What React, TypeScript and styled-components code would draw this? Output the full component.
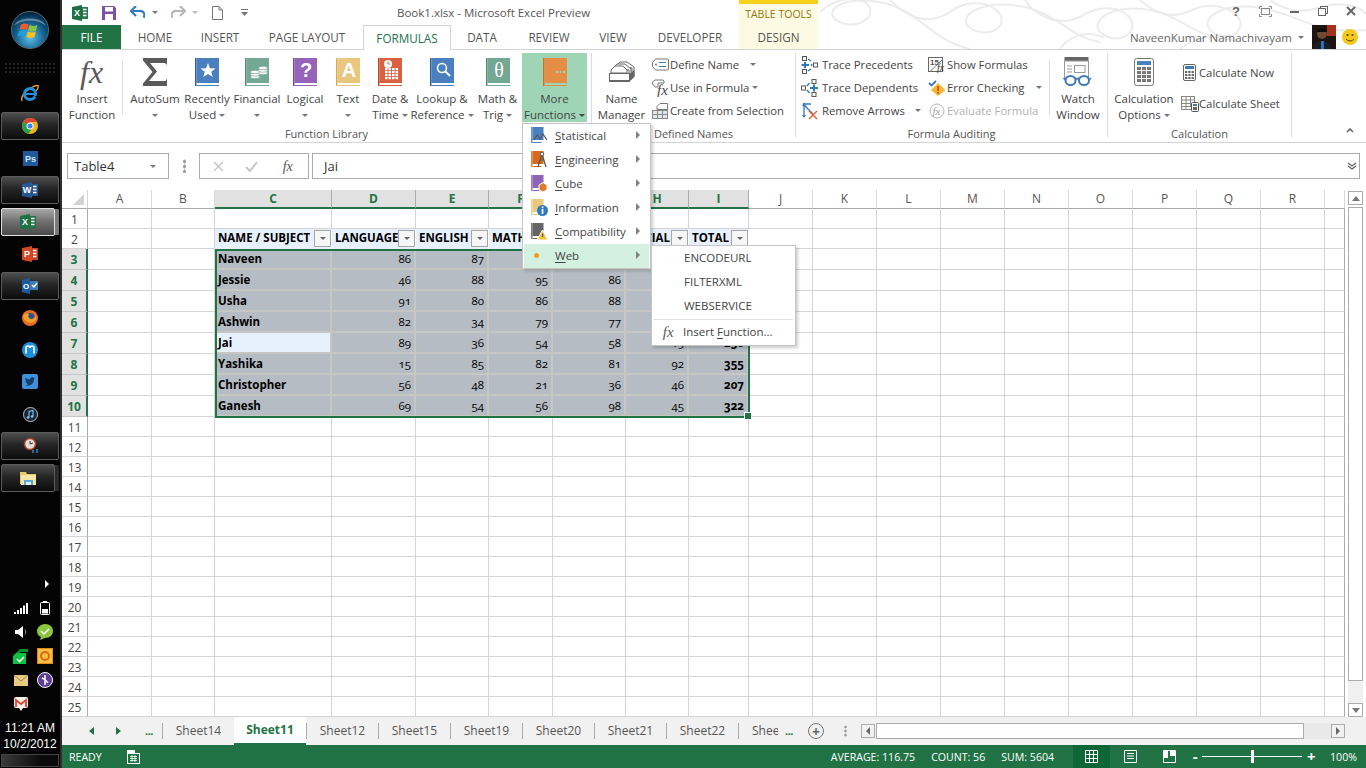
import styled, { createGlobalStyle } from "styled-components";
import type { ReactNode } from "react";

const GlobalStyle = createGlobalStyle`
	html, body {
		margin: 0;
		padding: 0;
		overflow: hidden;
		background: #fff;
		font-family: "Open Sans", "Liberation Sans", sans-serif;
	}
	* { box-sizing: border-box; }
`;

const GREEN = "#217346";
const TEXT = "#444444";
const UI_FONT = `"Open Sans", "Liberation Sans", sans-serif`;

const Page = styled.div`
	position: relative;
	display: flex;
	width: 1366px;
	height: 768px;
	overflow: hidden;
	background: #fff;
	color: ${TEXT};
	font-size: 11.3px;
`;

const Gap = styled.span<{ $w: number }>`
	width: ${(p) => p.$w}px;
	flex-shrink: 0;
`;

/* ---------- windows taskbar ---------- */

const Sidebar = styled.aside`
	display: flex;
	flex-direction: column;
	width: 62px;
	height: 768px;
	background: #030303;
	border-right: 2px solid #2d2d2d;
	flex-shrink: 0;
`;

const Orb = styled.div`
	display: flex;
	justify-content: center;
	align-items: center;
	height: 60px;
	padding-right: 1px;
`;

const Gripper = styled.div`
	height: 18px;
	margin: 0 4px;
	background-image: radial-gradient(#4a4a4a 0.6px, transparent 0.8px);
	background-size: 4px 4px;
	background-position: 0 2px;
	background-repeat: repeat;
	clip-path: inset(1px 0 5px 0);
`;

const TaskList = styled.div`
	display: flex;
	flex-direction: column;
`;

const TaskSlot = styled.div<{ $state?: "open" | "active" | "group" }>`
	display: flex;
	justify-content: center;
	align-items: center;
	height: 28px;
	margin: 2px ${(p) => (p.$state === "active" || p.$state === "group" ? "5px" : "1px")} 2px 1px;
	border-radius: 2px;
	border: 1px solid
		${(p) => (p.$state === "active" ? "#e0e0e0" : p.$state ? "#5c5c5c" : "transparent")};
	background: ${(p) =>
		p.$state === "active"
			? "linear-gradient(180deg, #a8a8a8 0%, #6e6e6e 50%, #4a4a4a 100%)"
			: p.$state
				? "linear-gradient(180deg, #4e4e4e 0%, #262626 45%, #0c0c0c 100%)"
				: "transparent"};
	box-shadow: ${(p) =>
		p.$state === "active" ? "5px 0 0 -1px #7a7a7a" : p.$state === "group" ? "5px 0 0 -1px #2a2a2a" : "none"};
`;

const Spring = styled.div`
	flex: 1;
`;

const TrayArrow = styled.div`
	width: 0;
	height: 0;
	margin: 0 0 8px 45px;
	border-left: 4px solid #fff;
	border-top: 4px solid transparent;
	border-bottom: 4px solid transparent;
`;

const Tray = styled.div`
	display: grid;
	grid-template-columns: 24px 24px;
	grid-auto-rows: 24px;
	margin-left: 9px;
	place-items: center;
`;

const Clock = styled.div`
	margin-top: 4px;
	color: #fff;
	font-size: 12px;
	line-height: 16px;
	text-align: center;
	white-space: nowrap;
	font-family: "Liberation Sans", sans-serif;
`;

const ShowDesktop = styled.div`
	height: 13px;
	margin: 2px 1px 1px 1px;
	border: 1px solid #444;
	background: linear-gradient(90deg, #3a3a3a, #0b0b0b 70%);
`;

/* ---------- main column ---------- */

const Main = styled.main`
	display: flex;
	flex-direction: column;
	flex: 1;
	min-width: 0;
`;

const Header = styled.header`
	position: relative;
	height: 50px;
	border-bottom: 1px solid #d4d4d4;
`;

const Swirl = styled.svg`
	position: absolute;
	left: 758px;
	top: 0;
`;

const TitleBar = styled.div`
	position: relative;
	display: flex;
	height: 25px;
`;

const QuickAccess = styled.div`
	display: flex;
	align-items: center;
	width: 335px;
	height: 25px;
	padding-left: 10px;
`;

const QatSlot = styled.span<{ $w: number }>`
	display: flex;
	align-items: center;
	width: ${(p) => p.$w}px;
`;

const Title = styled.div`
	width: 342px;
	color: #555;
	font-size: 11.5px;
	line-height: 26px;
`;

const ContextLabel = styled.div`
	width: 79px;
	height: 25px;
	background: #fdfae4;
	border-top: 4px solid #f6d21c;
	color: #9a7608;
	font-size: 10.5px;
	line-height: 21px;
	text-align: center;
	white-space: nowrap;
`;

const WindowControls = styled.div`
	display: flex;
	align-items: center;
	margin-left: auto;
	height: 22px;
	padding-right: 10px;
	gap: 18px;
`;

const TabRow = styled.nav`
	position: relative;
	display: flex;
	height: 24px;
`;

const Tab = styled.div<{ $w: number; $kind?: "file" | "active" | "context" }>`
	width: ${(p) => p.$w}px;
	height: ${(p) => (p.$kind === "active" ? "25px" : "24px")};
	line-height: 24px;
	text-align: center;
	font-size: 11.7px;
	white-space: nowrap;
	color: ${(p) => (p.$kind === "file" ? "#fff" : p.$kind === "active" ? GREEN : "#555")};
	background: ${(p) =>
		p.$kind === "file" ? GREEN : p.$kind === "context" ? "#fdfae4" : p.$kind === "active" ? "#fff" : "transparent"};
	border: ${(p) => (p.$kind === "active" ? "1px solid #d4d4d4" : "none")};
	border-bottom: none;
	z-index: 1;
`;

const UserArea = styled.div`
	display: flex;
	align-items: center;
	margin-left: auto;
	height: 24px;
	padding-right: 8px;
`;

const UserName = styled.span`
	margin-right: 6px;
	color: #666;
	font-size: 11.5px;
	white-space: nowrap;
`;

const SmallCaret = styled.span<{ $gap?: number; $color?: string }>`
	display: inline-block;
	width: 0;
	height: 0;
	margin-left: ${(p) => p.$gap ?? 3}px;
	border-top: 3px solid ${(p) => p.$color ?? "#777"};
	border-left: 3px solid transparent;
	border-right: 3px solid transparent;
	vertical-align: middle;
`;

/* ---------- ribbon ---------- */

const Ribbon = styled.section`
	display: flex;
	height: 93px;
	padding-top: 3px;
	border-bottom: 1px solid #d4d4d4;
`;

const RibbonGroup = styled.div<{ $w: number }>`
	display: flex;
	flex-direction: column;
	width: ${(p) => p.$w}px;
	height: 84px;
	border-right: 1px solid #dcdcdc;
	flex-shrink: 0;
`;

const GroupBody = styled.div`
	display: flex;
	height: 69px;
	flex-shrink: 0;
`;

const GroupLabel = styled.div`
	height: 10px;
	margin-top: 5px;
	text-align: center;
	color: #555;
	font-size: 11px;
	line-height: 14px;
`;

const LargeButton = styled.div<{ $w: number; $on?: boolean }>`
	display: flex;
	flex-direction: column;
	align-items: center;
	width: ${(p) => p.$w}px;
	height: 69px;
	padding-top: 4px;
	background: ${(p) => (p.$on ? "#9fd5b7" : "transparent")};
	flex-shrink: 0;
`;

const LargeIcon = styled.div`
	display: flex;
	align-items: center;
	justify-content: center;
	height: 30px;
	margin-bottom: 4px;
	flex-shrink: 0;
`;

const LargeLabel = styled.div`
	font-size: 11.5px;
	line-height: 16px;
	text-align: center;
	white-space: nowrap;
	flex-shrink: 0;
`;

const InnerDivider = styled.div`
	width: 1px;
	height: 55px;
	margin: 7px 4px 0 0;
	background: #dcdcdc;
	flex-shrink: 0;
`;

const SmallColumn = styled.div<{ $w: number; $top?: number; $gap?: number }>`
	display: flex;
	flex-direction: column;
	width: ${(p) => p.$w}px;
	padding-top: ${(p) => p.$top ?? 0}px;
	gap: ${(p) => p.$gap ?? 0}px;
	flex-shrink: 0;
`;

const SmallButton = styled.div<{ $muted?: boolean }>`
	display: flex;
	align-items: center;
	height: 23px;
	font-size: 11.3px;
	white-space: nowrap;
	color: ${(p) => (p.$muted ? "#b1b1b1" : TEXT)};
`;

const SmallIcon = styled.span<{ $w?: number }>`
	display: flex;
	align-items: center;
	justify-content: center;
	width: ${(p) => p.$w ?? 19}px;
	height: 18px;
	flex-shrink: 0;
`;

const CollapseArrow = styled.svg`
	align-self: flex-start;
	margin: 75px 0 0 54px;
`;

/* ---------- formula bar ---------- */

const FormulaBar = styled.div`
	display: flex;
	align-items: center;
	height: 47px;
	padding: 0 6px 1px 5px;
	flex-shrink: 0;
`;

const NameBox = styled.div`
	display: flex;
	align-items: center;
	justify-content: space-between;
	width: 102px;
	height: 26px;
	padding: 0 12px 0 6px;
	border: 1px solid #ababab;
	font-size: 13px;
	color: #333;
`;

const BarGrip = styled.div`
	width: 3px;
	height: 14px;
	margin: 0 13px 0 14px;
	background-image: radial-gradient(#9a9a9a 1.1px, transparent 1.3px);
	background-size: 3px 5px;
`;

const FxBox = styled.div`
	display: flex;
	align-items: center;
	width: 110px;
	height: 26px;
	padding: 0 13px;
	justify-content: space-between;
	border: 1px solid #ababab;
`;

const FormulaInput = styled.div`
	display: flex;
	align-items: center;
	justify-content: space-between;
	flex: 1;
	height: 26px;
	margin-left: 3px;
	padding: 0 2px 0 11px;
	border: 1px solid #ababab;
	font-size: 13px;
	color: #333;
`;

/* ---------- sheet ---------- */

const SheetArea = styled.div`
	display: flex;
	height: 527px;
	flex-shrink: 0;
`;

const COLUMN_SIZES = [26, 64, 63, 117, 84, 73, 64, 73, 63, 60, 64, 64, 64, 64, 64, 64, 64, 64, 64, 20];
const ROW_SIZES = [19, 20, 20, 21, 21, 21, 21, 21, 21, 21, 21, ...Array(15).fill(20)];

const SheetGrid = styled.div`
	position: relative;
	display: grid;
	grid-template-columns: ${COLUMN_SIZES.map((c) => `${c}px`).join(" ")};
	grid-template-rows: ${ROW_SIZES.map((r) => `${r}px`).join(" ")};
	width: 1283px;
	height: 527px;
	border-bottom: 1px solid #ababab;
`;

const Corner = styled.div`
	position: relative;
	border-bottom: 1px solid #ababab;
	border-right: 1px solid #d4d4d4;
	&::after {
		content: "";
		position: absolute;
		right: 3px;
		bottom: 3px;
		width: 0;
		height: 0;
		border-left: 11px solid transparent;
		border-bottom: 11px solid #d2d2d2;
	}
`;

const ColHead = styled.div<{ $on?: boolean }>`
	text-align: center;
	font-size: 12px;
	line-height: 18px;
	color: ${(p) => (p.$on ? GREEN : "#555")};
	font-weight: ${(p) => (p.$on ? 700 : 400)};
	background: ${(p) => (p.$on ? "#e1e1e1" : "#fff")};
	border-right: 1px solid ${(p) => (p.$on ? "#ababab" : "#d9d9d9")};
	border-bottom: ${(p) => (p.$on ? `2px solid ${GREEN}` : "1px solid #ababab")};
`;

const RowHead = styled.div<{ $on?: boolean }>`
	text-align: center;
	font-size: 12px;
	line-height: 21px;
	color: ${(p) => (p.$on ? GREEN : "#444")};
	font-weight: ${(p) => (p.$on ? 700 : 400)};
	background: ${(p) => (p.$on ? "#e1e1e1" : "#fff")};
	border-right: ${(p) => (p.$on ? `2px solid ${GREEN}` : "1px solid #ababab")};
	border-bottom: 1px solid ${(p) => (p.$on ? "#c6c6c6" : "#d4d4d4")};
`;

const Cell = styled.div<{ $kind?: "head" | "band" | "active"; $right?: boolean; $bold?: boolean; $edge?: boolean }>`
	display: flex;
	align-items: center;
	justify-content: ${(p) => (p.$right ? "flex-end" : p.$kind === "head" ? "space-between" : "flex-start")};
	padding: 0 ${(p) => (p.$right ? "3px" : "0")} ${(p) => (p.$kind === "head" ? "1px" : "0")} 3px;
	overflow: hidden;
	white-space: nowrap;
	color: #000;
	font-family: "Open Sans", sans-serif;
	font-size: 11.5px;
	font-weight: ${(p) => (p.$bold ? 700 : 400)};
	font-variant-numeric: oldstyle-nums;
	background: ${(p) =>
		p.$kind === "band" ? "#b5bcc4" : p.$kind === "active" ? "#e7f1fd" : p.$kind === "head" ? "#e7f1fd" : "#fff"};
	border-right: ${(p) =>
		p.$kind === "band" || p.$kind === "active"
			? "2px solid #c6c6c2"
			: p.$kind === "head"
				? "1px solid #fff"
				: `1px solid ${p.$edge ? "#ababab" : "#d4d4d4"}`};
	border-bottom: ${(p) =>
		p.$kind === "band" || p.$kind === "active"
			? "2px solid #c6c6c2"
			: p.$kind === "head"
				? "none"
				: "1px solid #d4d4d4"};
`;

const HeadText = styled.span`
	padding-bottom: 2px;
	flex-shrink: 1;
	overflow: hidden;
`;

const FilterButton = styled.span`
	display: flex;
	align-items: center;
	justify-content: center;
	width: 17px;
	height: 17px;
	background: #f6f6f6;
	border: 1px solid #a6a6a6;
	flex-shrink: 0;
`;

const Selection = styled.div`
	position: absolute;
	left: 153px;
	top: 59px;
	width: 535px;
	height: 169px;
	border: 2px solid ${GREEN};
	pointer-events: none;
	&::after {
		content: "";
		position: absolute;
		right: -4px;
		bottom: -4px;
		width: 6px;
		height: 6px;
		background: ${GREEN};
		border: 1px solid #fff;
	}
`;

const VScroll = styled.div`
	display: flex;
	flex-direction: column;
	width: 21px;
	padding: 1px 3px 0 3px;
`;

const ScrollButton = styled.div<{ $w?: number }>`
	display: flex;
	align-items: center;
	justify-content: center;
	width: ${(p) => (p.$w ? `${p.$w}px` : "auto")};
	height: 14px;
	border: 1px solid #ababab;
	flex-shrink: 0;
`;

const VThumb = styled.div`
	height: 475px;
	margin-top: 2px;
	border: 1px solid #ababab;
`;

const VTrack = styled.div`
	height: 22px;
	background: #f0f0f0;
`;

/* ---------- sheet tabs ---------- */

const SheetTabs = styled.div`
	display: flex;
	align-items: center;
	height: 28px;
	background: #f1f1f1;
	flex-shrink: 0;
`;

const TabNav = styled.div`
	display: flex;
	align-items: center;
	justify-content: space-between;
	width: 100px;
	height: 28px;
	padding: 0 7px 0 27px;
`;

const SheetTab = styled.div<{ $active?: boolean; $w?: number }>`
	width: ${(p) => p.$w ?? 72}px;
	height: ${(p) => (p.$active ? "28px" : "16px")};
	margin-top: ${(p) => (p.$active ? "-1px" : "0")};
	overflow: hidden;
	white-space: nowrap;
	text-align: ${(p) => (p.$w ? "left" : "center")};
	padding-left: ${(p) => (p.$w ? "13px" : "0")};
	font-size: 12px;
	line-height: ${(p) => (p.$active ? "26px" : "16px")};
	color: ${(p) => (p.$active ? GREEN : "#555")};
	font-weight: ${(p) => (p.$active ? 700 : 400)};
	background: ${(p) => (p.$active ? "#fff" : "transparent")};
	border-bottom: ${(p) => (p.$active ? `2px solid ${GREEN}` : "none")};
	border-left: ${(p) => (p.$active ? "none" : "1px solid #ababab")};
`;

const GreenDots = styled.span<{ $w: number }>`
	width: ${(p) => p.$w}px;
	text-align: center;
	color: ${GREEN};
	font-weight: 700;
	font-size: 11px;
	line-height: 10px;
	letter-spacing: -0.5px;
`;

const AddSheet = styled.span`
	display: flex;
	align-items: center;
	justify-content: center;
	width: 16px;
	height: 16px;
	margin: 0 7px 0 8px;
	border: 1px solid #777;
	border-radius: 50%;
	color: #666;
	font-size: 14px;
	font-weight: 700;
	line-height: 13px;
`;

const SplitGrip = styled.span`
	width: 3px;
	height: 12px;
	margin: 0 14px 0 13px;
	background-image: radial-gradient(#9a9a9a 1px, transparent 1.2px);
	background-size: 3px 4px;
`;

const HScroll = styled.div`
	display: flex;
	align-items: center;
	width: 484px;
	height: 16px;
	flex-shrink: 0;
`;

const HThumb = styled.div`
	width: 428px;
	height: 16px;
	margin-left: 1px;
	background: #fff;
	border: 1px solid #ababab;
`;

const HTrack = styled.div`
	width: 27px;
	height: 16px;
	background: #e9e9e9;
`;

/* ---------- status bar ---------- */

const StatusBar = styled.footer`
	display: flex;
	align-items: center;
	height: 23px;
	background: ${GREEN};
	color: #fff;
	font-size: 10.6px;
	flex-shrink: 0;
`;

const StatusLeft = styled.div`
	display: flex;
	align-items: center;
	gap: 25px;
	padding-left: 7px;
`;

const StatusStats = styled.div`
	display: flex;
	margin-left: auto;
	gap: 16px;
`;

const ViewButton = styled.div<{ $on?: boolean; $w: number }>`
	display: flex;
	align-items: center;
	justify-content: center;
	width: ${(p) => p.$w}px;
	height: 23px;
	background: ${(p) => (p.$on ? "#0f6636" : "transparent")};
`;

const ZoomBar = styled.div`
	position: relative;
	width: 100px;
	height: 1px;
	margin: 0 5px 0 3px;
	background: #fff;
	flex-shrink: 0;
	&::after {
		content: "";
		position: absolute;
		left: 49px;
		top: -6px;
		width: 3px;
		height: 13px;
		background: #fff;
	}
`;

const ZoomSign = styled.span`
	width: 8px;
	text-align: center;
	font-size: 15px;
	font-weight: 700;
	line-height: 15px;
`;

const ZoomPercent = styled.span`
	margin: 0 9px 0 15px;
`;

/* ---------- flyout menus ---------- */

const Menu = styled.div<{ $left: number; $top: number; $w: number; $h: number }>`
	position: absolute;
	left: ${(p) => p.$left}px;
	top: ${(p) => p.$top}px;
	width: ${(p) => p.$w}px;
	height: ${(p) => p.$h}px;
	padding: 0 1px;
	background: #fff;
	border: 1px solid #c6c6c6;
	box-shadow: 2px 2px 3px rgba(0, 0, 0, 0.2);
	font-family: ${UI_FONT};
	z-index: 5;
`;

const MenuItem = styled.div<{ $on?: boolean }>`
	display: flex;
	align-items: center;
	height: 24px;
	padding: 0 9px 2px 0;
	font-size: 11.5px;
	color: ${TEXT};
	white-space: nowrap;
	background: ${(p) => (p.$on ? "#d3f0e0" : "transparent")};
	u {
		text-underline-offset: 2px;
	}
`;

const MenuGlyph = styled.span<{ $w: number }>`
	display: flex;
	align-items: center;
	justify-content: center;
	width: ${(p) => p.$w}px;
	flex-shrink: 0;
`;

const MenuArrow = styled.span`
	margin-left: auto;
	width: 0;
	height: 0;
	border-left: 4px solid #808080;
	border-top: 4px solid transparent;
	border-bottom: 4px solid transparent;
`;

const MenuDot = styled.span`
	width: 5px;
	height: 5px;
	border-radius: 50%;
	background: #f0a020;
`;

const MenuRule = styled.div`
	height: 1px;
	margin: 1px 1px 0 1px;
	background: #e1e1e1;
`;

/* ---------- icons ---------- */

const IconSvg = styled.svg`
	display: block;
	flex-shrink: 0;
`;

function Svg({ w, h, vb, children }: { w: number; h: number; vb?: string; children: ReactNode }) {
	return (
		<IconSvg width={w} height={h} viewBox={vb ?? `0 0 ${w} ${h}`}>
			{children}
		</IconSvg>
	);
}

function FxGlyph({ size, color = "#5a5a5a" }: { size: number; color?: string }) {
	return (
		<IconSvg width={size * 1.1} height={(size * 34) / 30} viewBox="0 0 33 34">
			<text x="16.5" y="27" textAnchor="middle" fontFamily="Liberation Serif, serif" fontStyle="italic" fontSize="30" fill={color}>
				fx
			</text>
		</IconSvg>
	);
}

function Book({ color, dark, children }: { color: string; dark: string; children?: ReactNode }) {
	return (
		<Svg w={24} h={28}>
			<rect x="0" y="0" width="1.5" height="28" fill={dark} />
			<rect x="1.5" y="0" width="22.5" height="25" fill={color} />
			<rect x="1.5" y="27" width="22.5" height="1" fill={color} />
			{children}
		</Svg>
	);
}

const Label = ({ x, y, size, children, fill = "#fff" }: { x: number; y: number; size: number; children: ReactNode; fill?: string }) => (
	<text x={x} y={y} fontFamily="Liberation Sans, sans-serif" fontWeight="700" fontSize={size} fill={fill} textAnchor="middle">
		{children}
	</text>
);

const StarBook = () => (
	<Book color="#4a80bd" dark="#2e5f99">
		<path d="M13 5l2 5.2 5.5.2-4.3 3.4 1.5 5.3-4.7-3-4.7 3 1.5-5.3-4.3-3.4 5.5-.2z" fill="#fff" />
	</Book>
);

const CoinBook = () => (
	<Book color="#74a893" dark="#4f8a72">
		<g fill="#fff" stroke="#74a893" strokeWidth="0.7">
			<ellipse cx="18" cy="15" rx="4.5" ry="1.7" />
			<ellipse cx="18" cy="12.5" rx="4.5" ry="1.7" />
			<ellipse cx="18" cy="10" rx="4.5" ry="1.7" />
			<ellipse cx="10" cy="19" rx="4.5" ry="1.7" />
			<ellipse cx="10" cy="16.5" rx="4.5" ry="1.7" />
			<ellipse cx="10" cy="14" rx="4.5" ry="1.7" />
		</g>
	</Book>
);

const LogicBook = () => (
	<Book color="#9563b9" dark="#7a459f">
		<Label x={13} y={19} size={20}>?</Label>
	</Book>
);

const TextBook = () => (
	<Book color="#eac77f" dark="#d7ab54">
		<Label x={13} y={19} size={20}>A</Label>
	</Book>
);

const DateBook = () => (
	<Book color="#d8623f" dark="#b9482a">
		<circle cx="10" cy="6" r="4" fill="#fff" />
		<path d="M10 3.5V6h2" stroke="#d8623f" fill="none" />
		<g fill="#fff">
			{[0, 1, 2, 3].flatMap((r) =>
				[0, 1, 2, 3].map((c) => <rect key={`${r}-${c}`} x={7 + c * 3.5} y={10 + r * 3} width="2.6" height="2.2" />),
			)}
		</g>
	</Book>
);

const LookupBook = () => (
	<Book color="#4a80bd" dark="#2e5f99">
		<circle cx="12" cy="10" r="4.5" fill="none" stroke="#fff" strokeWidth="1.6" />
		<path d="M15.5 13.5l4.5 4.5" stroke="#fff" strokeWidth="2" />
	</Book>
);

const MathBook = () => (
	<Book color="#74a893" dark="#4f8a72">
		<text x="13" y="19" fontFamily="Liberation Serif, serif" fontSize="20" fill="#fff" textAnchor="middle">
			θ
		</text>
	</Book>
);

const MoreBook = () => (
	<Book color="#e58d45" dark="#cf7127">
		<g fill="#9fd5b7">
			<rect x="13" y="13" width="2" height="2" />
			<rect x="16.5" y="13" width="2" height="2" />
			<rect x="20" y="13" width="2" height="2" />
		</g>
	</Book>
);

const Sigma = () => (
	<Svg w={24} h={28}>
		<path d="M0 0H24V7L22 5H7L14 13.5 6 23H22.5L24 20.5V28H0V25.5L9.5 14 0 2.5Z" fill="#595959" />
	</Svg>
);

const TagStack = () => (
	<Svg w={28} h={28}>
		<g fill="#fff" stroke="#666" strokeWidth="1">
			<path d="M9 7l3-3h7l7 5v9l-2 2V10z" />
			<path d="M6 9l3-3h8l6 5v9l-2 2V12z" />
			<path d="M3 12l4-4h8l4 4v3H3z" />
			<rect x="1.5" y="15.5" width="20" height="8" />
		</g>
		<path d="M21.5 16l5-4v7l-5 4.5z" fill="#666" />
		<rect x="2" y="22" width="19" height="1.5" fill="#666" />
	</Svg>
);

const WatchIcon = () => (
	<Svg w={30} h={32}>
		<rect x="1.5" y="1" width="24" height="4" fill="#666" />
		<g fill="none" stroke="#9a9a9a">
			<rect x="1.5" y="5" width="24" height="17" />
			<rect x="11.5" y="9.5" width="10.5" height="7" />
			<path d="M4 10h5M4 13h5M4 16h5" />
		</g>
		<g fill="#fff" stroke="#3f7ab8" strokeWidth="2">
			<ellipse cx="7.5" cy="24.5" rx="5" ry="4.5" />
			<ellipse cx="21" cy="24.5" rx="5" ry="4.5" />
		</g>
		<path d="M12.5 23h4M2.5 24L0.5 22M26 24l2-2" stroke="#3f7ab8" strokeWidth="1.6" />
	</Svg>
);

const CalcLarge = () => (
	<Svg w={20} h={28}>
		<rect x="0.5" y="0.5" width="19" height="27" rx="2" fill="#fff" stroke="#777" />
		<rect x="3" y="3" width="14" height="4" fill="#4a80bd" />
		<g fill="#777">
			{[0, 1, 2, 3].flatMap((r) =>
				[0, 1, 2].map((c) => <rect key={`${r}-${c}`} x={3 + c * 5} y={9 + r * 4} width="4" height="3" />),
			)}
		</g>
	</Svg>
);

const CalcNow = () => (
	<Svg w={13} h={17}>
		<rect x="0.5" y="0.5" width="12" height="16" rx="1.5" fill="#fff" stroke="#666" />
		<rect x="2" y="2" width="9" height="3" fill="#3f7ab8" />
		<g fill="#666">
			{[0, 1, 2].flatMap((r) => [0, 1, 2].map((c) => <rect key={`${r}-${c}`} x={2 + c * 3.3} y={7 + r * 3} width="2.3" height="2" />))}
		</g>
	</Svg>
);

const CalcSheet = () => (
	<Svg w={18} h={16}>
		<g fill="none" stroke="#888">
			<rect x="0.5" y="0.5" width="13" height="13" />
			<path d="M0.5 4h13M0.5 7.5h13M0.5 10.5h10M5 0.5v13M9.5 0.5v10" />
		</g>
		<rect x="10.5" y="6.5" width="7" height="9" rx="1" fill="#fff" stroke="#555" />
		<rect x="12" y="8" width="4" height="2" fill="#3f7ab8" />
		<rect x="12" y="11" width="4" height="3" fill="#666" />
	</Svg>
);

const DefineNameIcon = () => (
	<Svg w={17} h={13}>
		<path d="M3.5 1H15.5a1 1 0 0 1 1 1v9a1 1 0 0 1-1 1H3.5L.5 8.5v-4z" fill="#fff" stroke="#777" />
		<circle cx="4" cy="6.5" r="1" fill="#777" />
		<path d="M7 4.5h7M7 8.5h7" stroke="#3f7ab8" strokeWidth="1.2" />
	</Svg>
);

const UseFormulaIcon = () => (
	<Svg w={18} h={18}>
		<path d="M3 1h8l1 1v2H6v4H3L.5 5V3z" fill="#fff" stroke="#777" />
		<text x="5" y="16" fontFamily="Liberation Serif, serif" fontStyle="italic" fontSize="15" fill="#444">
			fx
		</text>
	</Svg>
);

const CreateSelIcon = () => (
	<Svg w={17} h={16}>
		<rect x="0.5" y="7.5" width="15" height="8" fill="#dfe7ee" stroke="#888" />
		<path d="M5.5 7.5v8M10.5 7.5v8M.5 11.5h15" stroke="#888" />
		<path d="M5 3.5L8 .5h7.5v6H5z" fill="#fff" stroke="#777" />
	</Svg>
);

const TracePrecIcon = () => (
	<Svg w={17} h={18}>
		<g fill="#fff" stroke="#555">
			<rect x="1.5" y="0.5" width="4" height="4" />
			<rect x="1.5" y="13.5" width="4" height="4" />
			<rect x="12.5" y="7" width="4" height="4" />
		</g>
		<path d="M0.5 9h7.5M4 6v6" stroke="#2f79c2" strokeWidth="2" />
		<path d="M7 3l3 2M7 15l3-2" stroke="#2f79c2" strokeWidth="1.4" />
		<path d="M10 7.5L12 9 10 10.5z" fill="#2f79c2" />
	</Svg>
);

const TraceDepIcon = () => (
	<Svg w={17} h={18}>
		<g fill="#fff" stroke="#555">
			<rect x="0.5" y="7" width="4" height="4" />
			<rect x="11" y="0.5" width="4" height="4" />
			<rect x="11" y="13.5" width="4" height="4" />
		</g>
		<path d="M9 9h8M13 5.5v7" stroke="#2f79c2" strokeWidth="2" />
		<path d="M6 7l2.5-3M6 11l2.5 3" stroke="#2f79c2" strokeWidth="1.4" />
	</Svg>
);

const RemoveArrowsIcon = () => (
	<Svg w={17} h={18}>
		<path d="M3 1v13M3 3l9 9M2 2h8" stroke="#2f79c2" strokeWidth="1.3" fill="none" />
		<path d="M3 1L1 4h4zM3 16l-2-3h4z" fill="#2f79c2" />
		<path d="M8 9l8 8M16 9l-8 8" stroke="#e0663a" strokeWidth="1.5" />
	</Svg>
);

const ShowFormulasIcon = () => (
	<Svg w={18} h={16}>
		<rect x="0.5" y="0.5" width="14" height="14" fill="#fff" stroke="#666" />
		<text x="2" y="8" fontFamily="Liberation Sans, sans-serif" fontWeight="700" fontSize="8" fill="#555">
			15
		</text>
		<path d="M2 14.5L15 2" stroke="#777" />
		<text x="9" y="14" fontFamily="Liberation Serif, serif" fontStyle="italic" fontSize="10" fill="#333">
			fx
		</text>
	</Svg>
);

const ErrorIcon = () => (
	<Svg w={18} h={16}>
		<path d="M1 3l2.5 2.5L8 1" stroke="#3f7ab8" strokeWidth="1.8" fill="none" />
		<path d="M10 3L17.5 10 10 16 3 10z" fill="#f7b733" />
		<rect x="9.2" y="6" width="1.8" height="5" fill="#d8512a" />
		<rect x="9.2" y="12" width="1.8" height="1.8" fill="#d8512a" />
	</Svg>
);

const EvalIcon = () => (
	<Svg w={16} h={16}>
		<circle cx="8" cy="8" r="7" fill="#fff" stroke="#b5b5b5" />
		<text x="3.5" y="12" fontFamily="Liberation Serif, serif" fontStyle="italic" fontSize="11" fill="#a0a0a0">
			fx
		</text>
	</Svg>
);

function MiniBook({ color, children }: { color: string; children?: ReactNode }) {
	return (
		<Svg w={17} h={17}>
			<rect x="0" y="0" width="1.5" height="16" fill={color} opacity="0.85" />
			<rect x="1.5" y="0" width="11" height="13" fill={color} />
			<rect x="1.5" y="15" width="9" height="1" fill={color} />
			{children}
		</Svg>
	);
}

/* ---------- taskbar icons ---------- */

const StartOrb = () => (
	<Svg w={38} h={38}>
		<defs>
			<radialGradient id="orb" cx="50%" cy="70%" r="65%">
				<stop offset="0%" stopColor="#5cc0e8" />
				<stop offset="60%" stopColor="#15608f" />
				<stop offset="100%" stopColor="#062a45" />
			</radialGradient>
		</defs>
		<circle cx="19" cy="19" r="18.5" fill="url(#orb)" stroke="#5a6a72" />
		<path d="M3 15C6 5 32 5 35 15 28 8 10 8 3 15z" fill="#fff" opacity="0.35" />
		<path d="M10 13.5c3-1.5 5-1.5 7.5 0l-1.5 5.5c-2-1.5-5-1.5-7.5 0z" fill="#f15a29" />
		<path d="M18.5 14c3 1.5 5 1.5 8 0L25 19.5c-3 1.5-5 1-8 0z" fill="#8cc63f" />
		<path d="M8.2 20c3-1.5 5-1.5 7.5 0L14 25.5c-2-1.5-5-1.5-7.5 0z" fill="#1e9fe0" />
		<path d="M16.8 20.5c3 1 5 1.5 8 0L23.5 26c-3 1.5-5 1-8 0z" fill="#fcc419" />
	</Svg>
);

const IeIcon = () => (
	<Svg w={18} h={18}>
		<path d="M1 16C-1 10 8 2 17 0c1 3-1 5-2 6" fill="none" stroke="#f6b01a" strokeWidth="1.3" />
		<circle cx="9" cy="9" r="5.5" fill="none" stroke="#1e90e0" strokeWidth="3" />
		<rect x="5" y="8" width="9" height="2" fill="#1e90e0" />
		<path d="M14 11l3 1h-3z" fill="#030303" />
	</Svg>
);

const ChromeIcon = () => (
	<Svg w={16} h={16} vb="0 0 32 32">
		<circle cx="16" cy="16" r="16" fill="#e8b71c" />
		<path d="M16 16L2.5 7.5A16 16 0 0 1 30 8H16z" fill="#db4437" />
		<path d="M16 16L2.5 7.5A16 16 0 0 0 13 31.7L20 20z" fill="#2d9d4c" />
		<circle cx="16" cy="16" r="7" fill="#fff" />
		<circle cx="16" cy="16" r="5" fill="#4285f4" />
	</Svg>
);

const PsIcon = () => (
	<Svg w={15} h={15}>
		<rect width="15" height="15" fill="#1f5b9c" />
		<text x="2" y="11" fontFamily="Liberation Sans, sans-serif" fontWeight="700" fontSize="9" fill="#cfe3f7">
			Ps
		</text>
	</Svg>
);

function OfficeIcon({ color, letter, lines }: { color: string; letter: string; lines?: boolean }) {
	return (
		<Svg w={16} h={16}>
			<rect x="8" y="2" width="8" height="12" fill={color} opacity="0.95" />
			<path d="M0 2L10 0V16L0 14z" fill={color} />
			<text x="5" y="11" fontFamily="Liberation Sans, sans-serif" fontWeight="700" fontSize="9" fill="#fff" textAnchor="middle">
				{letter}
			</text>
			{lines && <path d="M11 4.5h3.5M11 7.5h3.5M11 10.5h3.5" stroke="#fff" strokeWidth="1.3" />}
		</Svg>
	);
}

const OutlookIcon = () => (
	<Svg w={16} h={16}>
		<rect x="8" y="3" width="8" height="9" fill="#3f7ab8" />
		<path d="M10 7l2 2 3-4" stroke="#fff" strokeWidth="1.3" fill="none" />
		<path d="M0 2L8 0V16L0 14z" fill="#1f5b9c" />
		<text x="4" y="11" fontFamily="Liberation Sans, sans-serif" fontWeight="700" fontSize="8" fill="#fff" textAnchor="middle">
			O
		</text>
	</Svg>
);

const FirefoxIcon = () => (
	<Svg w={16} h={16}>
		<circle cx="8" cy="8" r="8" fill="#e66a1f" />
		<circle cx="8.5" cy="7" r="4" fill="#2b4f8f" />
		<path d="M1 6c1 6 6 8 11 6 3-2 3-5 2-7-1 4-5 5-7 3-1-1-1-3 0-4C4 3 2 4 1 6z" fill="#f0a12c" />
	</Svg>
);

const MaxthonIcon = () => (
	<Svg w={16} h={16}>
		<circle cx="8" cy="8" r="8" fill="#1f8fd8" />
		<path d="M4 11.5V6a2 2 0 0 1 4 0 2 2 0 0 1 4 0v5.5" fill="none" stroke="#fff" strokeWidth="1.6" />
	</Svg>
);

const TwitterIcon = () => (
	<Svg w={16} h={16}>
		<rect width="16" height="15" rx="2" fill="#3e90d8" />
		<path d="M3 11c5 2 9-1 9-6l1.3-1.3-1.5.2C11 2.5 8 3 8 5.5 6 5.5 4.5 4.5 3.5 3.5 3 5 3.5 6 4.5 7L3.5 6.8C3.5 8 4.5 9 5.5 9.3L4.5 9.5C5 10 5.500 10.500 6.500 10.500 5.500 11 4.500 11.200 3 11z" fill="#123f6a" />
	</Svg>
);

const ItunesIcon = () => (
	<Svg w={15} h={15}>
		<circle cx="7.5" cy="7.5" r="7" fill="#1b2733" stroke="#b6c6d3" strokeWidth="1" />
		<path d="M6 10.5V4.5l4-1v6" fill="none" stroke="#7fc5ee" strokeWidth="1.1" />
		<circle cx="5" cy="10.5" r="1.3" fill="#7fc5ee" />
		<circle cx="9" cy="9.5" r="1.3" fill="#7fc5ee" />
	</Svg>
);

const SnipIcon = () => (
	<Svg w={17} h={17}>
		<circle cx="8" cy="6" r="5.5" fill="#e6dcd6" stroke="#a5402a" strokeWidth="1.4" />
		<path d="M8 3v3l3-1" stroke="#333" fill="none" />
		<path d="M11 12v3M15 11v4" stroke="#2f86c8" strokeWidth="1.5" />
	</Svg>
);

const FolderIcon = () => (
	<Svg w={17} h={15}>
		<path d="M0 1h6l1 2h9v10H0z" fill="#e6c770" />
		<rect x="1" y="4" width="15" height="10" fill="#f6e5a4" />
		<path d="M4 14V9h9v5z" fill="#5aa7dd" />
		<rect x="6" y="11" width="5" height="3" fill="#dff1fb" />
	</Svg>
);

const Signal = () => (
	<Svg w={15} h={11}>
		<g fill="#fff">
			<rect x="0" y="9" width="2" height="2" />
			<rect x="3" y="7" width="2" height="4" />
			<rect x="6" y="5" width="2" height="6" />
			<rect x="9" y="2.5" width="2" height="8.5" />
			<rect x="12" y="0" width="2" height="11" />
		</g>
	</Svg>
);

const Battery = () => (
	<Svg w={10} h={14}>
		<rect x="3" y="0" width="4" height="1.5" fill="#fff" />
		<rect x="0.5" y="1.5" width="9" height="12" rx="1" fill="none" stroke="#fff" />
		<rect x="2" y="8" width="6" height="4.5" fill="#fff" />
	</Svg>
);

const Speaker = () => (
	<Svg w={12} h={14}>
		<path d="M0 5h3l5-4v12L3 9H0z" fill="#fff" />
		<path d="M10 4.5c1 1.5 1 3.5 0 5" stroke="#9a9a9a" fill="none" />
	</Svg>
);

const ChatTray = () => (
	<Svg w={16} h={16}>
		<path d="M8 0c5 0 8 3 8 7s-3 7-8 7L3 16l1-3C1.5 12 0 10 0 7s3-7 8-7z" fill="#8cc63f" />
		<path d="M4 7l3 3 5-5" stroke="#fff" strokeWidth="1.5" fill="none" />
	</Svg>
);

const GreenTray = () => (
	<Svg w={16} h={16}>
		<path d="M0 8l3-3h10v11H0z" fill="#10c040" />
		<path d="M3 5l4-4h8v3H8L6 5z" fill="#0a8f2c" />
		<path d="M4 11l2.5 2.5L11 9" stroke="#fff" strokeWidth="1.6" fill="none" />
	</Svg>
);

const OrangeTray = () => (
	<Svg w={16} h={16}>
		<rect x="0.5" y="0.5" width="15" height="15" fill="#f6c043" stroke="#e08a1e" />
		<circle cx="8" cy="8" r="4" fill="none" stroke="#d96b1a" strokeWidth="2" />
	</Svg>
);

const MailTray = () => (
	<Svg w={14} h={11}>
		<rect width="14" height="11" fill="#eacb85" />
		<path d="M0 0l7 6 7-6" fill="none" stroke="#a8843c" />
	</Svg>
);

const TorrentTray = () => (
	<Svg w={16} h={16}>
		<circle cx="8" cy="8" r="7.5" fill="#5a3e98" stroke="#fff" />
		<path d="M8 3v10M5 6c3 1 5 3 6 5" stroke="#fff" strokeWidth="1.5" fill="none" />
	</Svg>
);

const GmailTray = () => (
	<Svg w={14} h={14}>
		<rect width="14" height="11" rx="2" fill="#f3eee8" />
		<path d="M2 10V3l5 4 5-4v7" fill="none" stroke="#d8432f" strokeWidth="1.8" />
		<path d="M5 11l2 3 2-3z" fill="#f3eee8" />
	</Svg>
);

/* ---------- page data ---------- */

const ribbonTabs: [string, number, ("file" | "active" | "context")?][] = [
	["FILE", 59, "file"],
	["HOME", 68],
	["INSERT", 62],
	["PAGE LAYOUT", 112],
	["FORMULAS", 88, "active"],
	["DATA", 62],
	["REVIEW", 72],
	["VIEW", 56],
	["DEVELOPER", 98],
	["DESIGN", 79, "context"],
];

const libraryButtons: [ReactNode, string, string, number][] = [
	[<Sigma />, "AutoSum", "", 56],
	[<StarBook />, "Recently", "Used", 48],
	[<CoinBook />, "Financial", "", 52],
	[<LogicBook />, "Logical", "", 44],
	[<TextBook />, "Text", "", 42],
	[<DateBook />, "Date &", "Time", 42],
	[<LookupBook />, "Lookup &", "Reference", 62],
	[<MathBook />, "Math &", "Trig", 49],
];

const columnLetters = ["A", "B", "C", "D", "E", "F", "G", "H", "I", "J", "K", "L", "M", "N", "O", "P", "Q", "R", ""];

const tableHead = ["NAME / SUBJECT", "LANGUAGE", "ENGLISH", "MATHS", "SCIENCE", "SOCIAL", "TOTAL"];

const tableRows: [string, number, number, number, number, number][] = [
	["Naveen", 86, 87, 95, 96, 96],
	["Jessie", 46, 88, 95, 86, 90],
	["Usha", 91, 80, 86, 88, 95],
	["Ashwin", 82, 34, 79, 77, 85],
	["Jai", 89, 36, 54, 58, 19],
	["Yashika", 15, 85, 82, 81, 92],
	["Christopher", 56, 48, 21, 36, 46],
	["Ganesh", 69, 54, 56, 98, 45],
];

const sheetNames = ["Sheet14", "Sheet11", "Sheet12", "Sheet15", "Sheet19", "Sheet20", "Sheet21", "Sheet22"];

const menuItems: [string, string, ReactNode][] = [
	["S", "tatistical", <MiniBook color="#4a80bd"><path d="M3 13l3-5 3 4 3-5 4 6" fill="none" stroke="#555" strokeWidth="1.2" /></MiniBook>],
	["E", "ngineering", <MiniBook color="#d86a1c"><path d="M11 3l-4 13M11 3l4 13M9 9h4" fill="none" stroke="#555" strokeWidth="1.2" /><circle cx="11" cy="3" r="1.8" fill="#fff" stroke="#555" /></MiniBook>],
	["C", "ube", <MiniBook color="#8f63b8"><path d="M8 10l4-2.5 4 2.5v5l-4 2-4-2z" fill="#e07b28" stroke="#fff" /></MiniBook>],
	["I", "nformation", <MiniBook color="#eac77f"><circle cx="11.5" cy="11.5" r="5.5" fill="#2f79c2" /><rect x="10.7" y="10" width="1.7" height="5" fill="#fff" /><rect x="10.7" y="7.5" width="1.7" height="1.7" fill="#fff" /></MiniBook>],
	["C", "ompatibility", <MiniBook color="#666"><path d="M11.5 7l5.5 10H6z" fill="#f7c23b" stroke="#fff" /><rect x="10.9" y="10.5" width="1.3" height="3.5" fill="#555" /></MiniBook>],
];

function cellsForRow(row: number) {
	// row is the 1-based sheet row number
	return columnLetters.map((_, col) => {
		const key = `${row}-${col}`;
		const edge = col === 18;
		if (col < 2 || col > 8 || row < 2 || row > 10) return <Cell key={key} $edge={edge} />;
		const t = col - 2;
		if (row === 2) {
			return (
				<Cell key={key} $kind="head" $bold>
					<HeadText>{tableHead[t]}</HeadText>
					<FilterButton>
						<SmallCaret $gap={0} $color="#666" />
					</FilterButton>
				</Cell>
			);
		}
		const data = tableRows[row - 3];
		if (t === 0) {
			return (
				<Cell key={key} $kind={row === 7 ? "active" : "band"} $bold>
					{data[0]}
				</Cell>
			);
		}
		const total = data[1] + data[2] + data[3] + data[4] + data[5];
		return (
			<Cell key={key} $kind="band" $right $bold={t === 6}>
				{t === 6 ? total : data[t]}
			</Cell>
		);
	});
}

function App() {
	return (
		<Page>
			<GlobalStyle />
			<Sidebar>
				<Orb>
					<StartOrb />
				</Orb>
				<Gripper />
				<TaskList>
					<TaskSlot><IeIcon /></TaskSlot>
					<TaskSlot $state="open"><ChromeIcon /></TaskSlot>
					<TaskSlot><PsIcon /></TaskSlot>
					<TaskSlot $state="open"><OfficeIcon color="#2b5797" letter="W" lines /></TaskSlot>
					<TaskSlot $state="active"><OfficeIcon color="#1e7145" letter="X" lines /></TaskSlot>
					<TaskSlot><OfficeIcon color="#d24726" letter="P" lines /></TaskSlot>
					<TaskSlot $state="open"><OutlookIcon /></TaskSlot>
					<TaskSlot><FirefoxIcon /></TaskSlot>
					<TaskSlot><MaxthonIcon /></TaskSlot>
					<TaskSlot><TwitterIcon /></TaskSlot>
					<TaskSlot><ItunesIcon /></TaskSlot>
					<TaskSlot $state="open"><SnipIcon /></TaskSlot>
					<TaskSlot $state="group"><FolderIcon /></TaskSlot>
				</TaskList>
				<Spring />
				<TrayArrow />
				<Tray>
					<Signal />
					<Battery />
					<Speaker />
					<ChatTray />
					<GreenTray />
					<OrangeTray />
					<MailTray />
					<TorrentTray />
					<GmailTray />
				</Tray>
				<Clock>
					11:21 AM
					<br />
					10/2/2012
				</Clock>
				<ShowDesktop />
			</Sidebar>

			<Main>
				<Header>
					<Swirl width="546" height="49" viewBox="0 0 546 49">
						<g fill="none" stroke="#ececec" strokeWidth="2">
							<path d="M0 12C20 -6 45 -4 50 8 54 22 30 30 16 20 4 10 22 -4 60 2 100 10 110 40 150 49" />
							<path d="M70 0C90 20 110 25 130 12 145 0 170 0 180 14 188 30 165 38 150 28 136 16 160 0 200 6 240 14 250 38 280 42" />
							<path d="M205 0C215 16 240 28 262 16 280 4 305 6 312 22 316 38 292 44 280 32 270 20 292 4 330 10 360 16 372 34 400 38" />
							<path d="M320 0C335 14 352 20 372 10 390 2 412 6 420 20 424 36 402 42 390 30 380 18 402 2 440 8 480 14 490 34 546 30" />
							<path d="M450 0C464 10 480 14 498 8 520 0 540 6 546 14" />
							<path d="M240 49C250 34 270 30 284 38M360 49C376 36 400 34 416 42" />
						</g>
					</Swirl>
					<TitleBar>
						<QuickAccess>
							<QatSlot $w={30}><OfficeIcon color="#1e7145" letter="X" lines /></QatSlot>
							<QatSlot $w={28}>
								<Svg w={14} h={14}>
									<path d="M0 0h12l2 2v12H0z" fill="#7e4fa3" />
									<rect x="3" y="1" width="8" height="4.5" fill="#fff" />
									<rect x="3" y="8" width="8" height="6" fill="#fff" />
								</Svg>
							</QatSlot>
							<QatSlot $w={41}>
								<Svg w={15} h={13}>
									<path d="M3 5h7a4 4 0 0 1 3.5 6.5" fill="none" stroke="#2f79c2" strokeWidth="2.2" />
									<path d="M6 0L1 5l5 5" fill="none" stroke="#2f79c2" strokeWidth="2.2" />
								</Svg>
								<SmallCaret $gap={7} />
							</QatSlot>
							<QatSlot $w={41}>
								<Svg w={15} h={13}>
									<path d="M12 5H5a4 4 0 0 0-3.5 6.5" fill="none" stroke="#b5b5b5" strokeWidth="2.2" />
									<path d="M9 0l5 5-5 5" fill="none" stroke="#b5b5b5" strokeWidth="2.2" />
								</Svg>
								<SmallCaret $gap={6} $color="#bbb" />
							</QatSlot>
							<QatSlot $w={29}>
								<Svg w={11} h={14}>
									<path d="M.5.5H7L10.5 4v9.5H.5z" fill="#fff" stroke="#777" />
									<path d="M7 .5V4h3.5" fill="none" stroke="#777" />
								</Svg>
							</QatSlot>
							<QatSlot $w={10}>
								<Svg w={7} h={7}>
									<rect x="0" y="0" width="7" height="1" fill="#777" />
									<path d="M0 3h7L3.5 7z" fill="#777" />
								</Svg>
							</QatSlot>
						</QuickAccess>
						<Title>Book1.xlsx - Microsoft Excel Preview</Title>
						<ContextLabel>TABLE TOOLS</ContextLabel>
						<WindowControls>
							<Svg w={10} h={14}>
								<text x="5" y="12" fontFamily="Liberation Sans, sans-serif" fontWeight="700" fontSize="13" fill="#666" textAnchor="middle">?</text>
							</Svg>
							<Svg w={13} h={11}>
								<rect x="2.5" y="2.5" width="8" height="6" fill="none" stroke="#888" />
								<path d="M.5 3V.5H3M10 .5h2.5V3M12.5 8v2.5H10M3 10.5H.5V8" fill="none" stroke="#888" />
							</Svg>
							<Svg w={10} h={11}>
								<rect x="0" y="5" width="9" height="2" fill="#666" />
							</Svg>
							<Svg w={10} h={10}>
								<rect x="2.5" y="0.5" width="7" height="7" fill="none" stroke="#666" />
								<rect x="0.5" y="2.5" width="7" height="7" fill="#fff" stroke="#666" />
							</Svg>
							<Svg w={10} h={10}>
								<path d="M1 1l8 8M9 1l-8 8" stroke="#666" strokeWidth="2" />
							</Svg>
						</WindowControls>
					</TitleBar>
					<TabRow>
						{ribbonTabs.map(([name, w, kind]) => (
							<Tab key={name} $w={w} $kind={kind}>
								{name}
							</Tab>
						))}
						<UserArea>
							<UserName>NaveenKumar Namachivayam</UserName>
							<SmallCaret $gap={0} />
							<Gap $w={8} />
							<Svg w={24} h={24}>
								<rect width="24" height="24" fill="#1c1410" />
								<rect x="15" y="0" width="9" height="11" fill="#a5321e" />
								<circle cx="10" cy="9" r="5" fill="#6d4a32" />
								<path d="M5 7c0-5 10-5 10 0z" fill="#0c0c0c" />
								<path d="M1 24c0-6 4-8 9-8s9 2 9 8z" fill="#1d1d24" />
								<rect x="9" y="16" width="3" height="8" fill="#2a6fb8" />
							</Svg>
							<Gap $w={6} />
							<Svg w={16} h={16}>
								<circle cx="8" cy="8" r="8" fill="#f4c81f" />
								<circle cx="5.5" cy="6" r="1.1" fill="#5a4a10" />
								<circle cx="10.5" cy="6" r="1.1" fill="#5a4a10" />
								<path d="M4 10c2 2.5 6 2.5 8 0" stroke="#5a4a10" fill="none" />
							</Svg>
						</UserArea>
					</TabRow>
				</Header>

				<Ribbon>
					<RibbonGroup $w={530}>
						<GroupBody>
							<LargeButton $w={60}>
								<LargeIcon><FxGlyph size={32} /></LargeIcon>
								<LargeLabel>Insert<br />Function</LargeLabel>
							</LargeButton>
							<InnerDivider />
							{libraryButtons.map(([icon, a, b, w]) => (
								<LargeButton key={a} $w={w}>
									<LargeIcon>{icon}</LargeIcon>
									<LargeLabel>
										{a}
										<br />
										{b}
										<SmallCaret $gap={b ? 3 : 0} />
									</LargeLabel>
								</LargeButton>
							))}
							<LargeButton $w={65} $on>
								<LargeIcon><MoreBook /></LargeIcon>
								<LargeLabel>More<br />Functions<SmallCaret $color="#444" /></LargeLabel>
							</LargeButton>
						</GroupBody>
						<GroupLabel>Function Library</GroupLabel>
					</RibbonGroup>

					<RibbonGroup $w={204}>
						<GroupBody>
							<LargeButton $w={59}>
								<LargeIcon><TagStack /></LargeIcon>
								<LargeLabel>Name<br />Manager</LargeLabel>
							</LargeButton>
							<SmallColumn $w={144}>
								<SmallButton>
									<SmallIcon><DefineNameIcon /></SmallIcon>
									Define Name<SmallCaret $gap={11} />
								</SmallButton>
								<SmallButton>
									<SmallIcon><UseFormulaIcon /></SmallIcon>
									Use in Formula<SmallCaret />
								</SmallButton>
								<SmallButton>
									<SmallIcon><CreateSelIcon /></SmallIcon>
									Create from Selection
								</SmallButton>
							</SmallColumn>
						</GroupBody>
						<GroupLabel>Defined Names</GroupLabel>
					</RibbonGroup>

					<RibbonGroup $w={312}>
						<GroupBody>
							<SmallColumn $w={131}>
								<SmallButton>
									<SmallIcon $w={26}><TracePrecIcon /></SmallIcon>
									Trace Precedents
								</SmallButton>
								<SmallButton>
									<SmallIcon $w={26}><TraceDepIcon /></SmallIcon>
									Trace Dependents
								</SmallButton>
								<SmallButton>
									<SmallIcon $w={26}><RemoveArrowsIcon /></SmallIcon>
									Remove Arrows<SmallCaret $gap={10} />
								</SmallButton>
							</SmallColumn>
							<SmallColumn $w={122}>
								<SmallButton>
									<SmallIcon $w={20}><ShowFormulasIcon /></SmallIcon>
									Show Formulas
								</SmallButton>
								<SmallButton>
									<SmallIcon $w={20}><ErrorIcon /></SmallIcon>
									Error Checking<SmallCaret $gap={11} />
								</SmallButton>
								<SmallButton $muted>
									<SmallIcon $w={20}><EvalIcon /></SmallIcon>
									Evaluate Formula
								</SmallButton>
							</SmallColumn>
							<InnerDivider />
							<LargeButton $w={48}>
								<LargeIcon><WatchIcon /></LargeIcon>
								<LargeLabel>Watch<br />Window</LargeLabel>
							</LargeButton>
						</GroupBody>
						<GroupLabel>Formula Auditing</GroupLabel>
					</RibbonGroup>

					<RibbonGroup $w={184}>
						<GroupBody>
							<LargeButton $w={72}>
								<LargeIcon><CalcLarge /></LargeIcon>
								<LargeLabel>Calculation<br />Options<SmallCaret /></LargeLabel>
							</LargeButton>
							<SmallColumn $w={111} $top={8} $gap={8}>
								<SmallButton>
									<SmallIcon><CalcNow /></SmallIcon>
									Calculate Now
								</SmallButton>
								<SmallButton>
									<SmallIcon><CalcSheet /></SmallIcon>
									Calculate Sheet
								</SmallButton>
							</SmallColumn>
						</GroupBody>
						<GroupLabel>Calculation</GroupLabel>
					</RibbonGroup>

					<CollapseArrow width="8" height="5" viewBox="0 0 8 5">
						<path d="M1 4l3-3 3 3" fill="none" stroke="#666" strokeWidth="1.6" />
					</CollapseArrow>
				</Ribbon>

				<FormulaBar>
					<NameBox>
						Table4
						<SmallCaret $gap={0} />
					</NameBox>
					<BarGrip />
					<FxBox>
						<Svg w={11} h={11}>
							<path d="M1 1l9 9M10 1l-9 9" stroke="#c6c6c6" strokeWidth="1.5" />
						</Svg>
						<Svg w={13} h={11}>
							<path d="M1 6l4 4 7-9" fill="none" stroke="#c6c6c6" strokeWidth="2" />
						</Svg>
						<FxGlyph size={14} color="#555" />
					</FxBox>
					<FormulaInput>
						Jai
						<Svg w={10} h={8}>
							<path d="M1 1l4 3 4-3M1 4l4 3 4-3" fill="none" stroke="#666" strokeWidth="1.3" />
						</Svg>
					</FormulaInput>
				</FormulaBar>

				<SheetArea>
					<SheetGrid>
						<Corner />
						{columnLetters.map((c, i) => (
							<ColHead key={i} $on={i >= 2 && i <= 8}>
								{c}
							</ColHead>
						))}
						{Array.from({ length: 25 }, (_, i) => i + 1).flatMap((row) => [
							<RowHead key={`h${row}`} $on={row >= 3 && row <= 10}>
								{row}
							</RowHead>,
							...cellsForRow(row),
						])}
						<Selection />
					</SheetGrid>
					<VScroll>
						<ScrollButton>
							<Svg w={8} h={5}>
								<path d="M4 0l4 5H0z" fill="#777" />
							</Svg>
						</ScrollButton>
						<VThumb />
						<VTrack />
						<ScrollButton>
							<Svg w={8} h={5}>
								<path d="M0 0h8L4 5z" fill="#777" />
							</Svg>
						</ScrollButton>
					</VScroll>
				</SheetArea>

				<SheetTabs>
					<TabNav>
						<Svg w={5} h={8}><path d="M5 0v8L0 4z" fill={GREEN} /></Svg>
						<Svg w={5} h={8}><path d="M0 0v8l5-4z" fill={GREEN} /></Svg>
						<GreenDots $w={12}>...</GreenDots>
					</TabNav>
					{sheetNames.map((name) => (
						<SheetTab key={name} $active={name === "Sheet11"}>
							{name}
						</SheetTab>
					))}
					<SheetTab $w={40}>Shee</SheetTab>
					<GreenDots $w={22}>...</GreenDots>
					<AddSheet>+</AddSheet>
					<SplitGrip />
					<HScroll>
						<ScrollButton $w={14}>
							<Svg w={4} h={8}><path d="M4 0v8L0 4z" fill="#666" /></Svg>
						</ScrollButton>
						<HThumb />
						<HTrack />
						<ScrollButton $w={14}>
							<Svg w={4} h={8}><path d="M0 0v8l4-4z" fill="#666" /></Svg>
						</ScrollButton>
					</HScroll>
				</SheetTabs>

				<StatusBar>
					<StatusLeft>
						READY
						<Svg w={13} h={14}>
							<rect x="0.5" y="3.5" width="12" height="10" fill="none" stroke="#fff" />
							<rect x="0" y="0" width="8" height="4" fill="#fff" />
							<path d="M3 6.5h7M3 8.5h7M3 10.5h7M5 5v7M8 5v7" stroke="#fff" strokeWidth="0.8" />
						</Svg>
					</StatusLeft>
					<StatusStats>
						<span>AVERAGE: 116.75</span>
						<span>COUNT: 56</span>
						<span>SUM: 5604</span>
					</StatusStats>
					<Gap $w={19} />
					<ViewButton $w={37} $on>
						<Svg w={13} h={13}>
							<path d="M.5.5h12v12H.5zM4.5.5v12M8.5.5v12M.5 4.5h12M.5 8.5h12" fill="none" stroke="#fff" />
						</Svg>
					</ViewButton>
					<ViewButton $w={40}>
						<Svg w={13} h={13}>
							<path d="M.5.5h12v12H.5z" fill="none" stroke="#fff" />
							<path d="M3 3.5h7M3 6h7M3 8.5h7" stroke="#fff" />
						</Svg>
					</ViewButton>
					<ViewButton $w={38}>
						<Svg w={13} h={13}>
							<path d="M.5.5h12v12H.5z" fill="none" stroke="#fff" />
							<path d="M1 1h4v7H1zM7 1h5v5H7z" fill="#fff" />
						</Svg>
					</ViewButton>
					<Gap $w={3} />
					<ZoomSign>-</ZoomSign>
					<ZoomBar />
					<ZoomSign>+</ZoomSign>
					<ZoomPercent>100%</ZoomPercent>
				</StatusBar>
			</Main>

			<Menu $left={522} $top={123} $w={129} $h={146}>
				{menuItems.map(([first, rest, icon]) => (
					<MenuItem key={first + rest}>
						<MenuGlyph $w={31}>{icon}</MenuGlyph>
						<span><u>{first}</u>{rest}</span>
						<MenuArrow />
					</MenuItem>
				))}
				<MenuItem $on>
					<MenuGlyph $w={25}><MenuDot /></MenuGlyph>
					<Gap $w={6} />
					<span><u>W</u>eb</span>
					<MenuArrow />
				</MenuItem>
			</Menu>
			<Menu $left={651} $top={245} $w={145} $h={101}>
				<MenuItem><MenuGlyph $w={31} />ENCODEURL</MenuItem>
				<MenuItem><MenuGlyph $w={31} />FILTERXML</MenuItem>
				<MenuItem><MenuGlyph $w={31} />WEBSERVICE</MenuItem>
				<MenuRule />
				<MenuItem>
					<MenuGlyph $w={30}><FxGlyph size={15} /></MenuGlyph>
					<span>Insert <u>F</u>unction...</span>
				</MenuItem>
			</Menu>
		</Page>
	);
}

export default App;
